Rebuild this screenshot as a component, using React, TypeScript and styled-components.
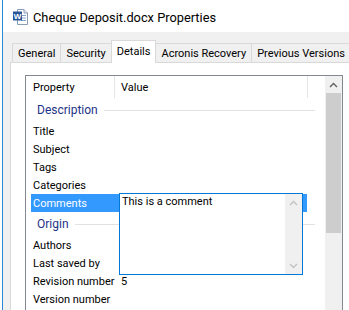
import React from "react";
import styled, { createGlobalStyle } from "styled-components";

const Global = createGlobalStyle`
  html, body { margin: 0; padding: 0; background: #ffffff; }
  body {
    font-family: Roboto, "Liberation Sans", Arial, sans-serif;
    font-size: 11px;
    color: #000000;
    overflow: hidden;
  }
  #root { width: 349px; height: 310px; overflow: hidden; }
`;

const Window = styled.div`
  margin-left: 2px;
  border-left: 1px solid #2b88d8;
  height: 310px;
  display: flex;
  flex-direction: column;
  background: #f0f0f0;
`;

const TitleBar = styled.div`
  height: 32px;
  flex: none;
  background: #ffffff;
  display: flex;
  align-items: center;
  gap: 5px;
  padding: 2px 0 0 10px;
  box-sizing: border-box;
  font-size: 12.8px;
  white-space: nowrap;
`;

const Body = styled.div`
  flex: 1;
  display: flex;
  flex-direction: column;
  padding: 8px 0 0 7px;
  min-height: 0;
`;

const TabStrip = styled.div`
  display: flex;
  align-items: flex-end;
  padding-left: 2px;
  height: 23px;
  flex: none;
  position: relative;
  z-index: 1;
  margin-bottom: -1px;
`;

const Tab = styled.div<{ $active?: boolean }>`
  height: ${(p) => (p.$active ? "23px" : "20px")};
  box-sizing: border-box;
  border: 1px solid #d9d9d9;
  border-bottom: ${(p) => (p.$active ? "none" : "1px solid #d9d9d9")};
  background: ${(p) => (p.$active ? "#ffffff" : "#f0f0f0")};
  margin-left: -1px;
  padding: ${(p) => (p.$active ? "3px 5px 0" : "2px 5px 0 5px")};
  white-space: nowrap;
  line-height: 15px;
  &:first-child { margin-left: 0; }
`;

const Panel = styled.div`
  flex: 1;
  background: #ffffff;
  border: 1px solid #d9d9d9;
  border-right: none;
  border-bottom: none;
  padding: 12px 0 0 14px;
  min-height: 0;
  overflow: hidden;
`;

const ListBox = styled.div`
  width: 318px;
  height: 260px;
  box-sizing: border-box;
  border: 1px solid #828790;
  background: #ffffff;
  display: flex;
`;

const Content = styled.div`
  flex: 1;
  position: relative;
  display: flex;
  flex-direction: column;
`;

const HeaderRow = styled.div`
  display: flex;
  height: 22px;
  flex: none;
`;

const HeaderCell = styled.div<{ $w: number; $pad: number }>`
  width: ${(p) => p.$w}px;
  box-sizing: border-box;
  padding-left: ${(p) => p.$pad}px;
  border-right: 1px solid #e5e5e5;
  display: flex;
  align-items: center;
`;

const GroupHeader = styled.div`
  height: 24px;
  flex: none;
  display: flex;
  align-items: center;
  padding: 0 10px 0 11px;
  color: #1e3287;
  font-size: 12px;
  &::after {
    content: "";
    flex: 1;
    height: 1px;
    background: #e2e2e2;
    margin-left: 6px;
  }
`;

const Row = styled.div<{ $selected?: boolean }>`
  height: 18px;
  flex: none;
  width: 276px;
  margin-left: 5px;
  padding-left: 2px;
  box-sizing: border-box;
  display: flex;
  align-items: center;
  background: ${(p) => (p.$selected ? "#3399ff" : "transparent")};
  color: ${(p) => (p.$selected ? "#ffffff" : "#000000")};
`;

const Label = styled.div`
  width: 88px;
  flex: none;
  white-space: nowrap;
`;

const Value = styled.div`
  flex: 1;
  white-space: nowrap;
`;

const EditBox = styled.div`
  position: absolute;
  left: 93px;
  top: 117px;
  width: 184px;
  height: 82px;
  box-sizing: border-box;
  border: 1px solid #0078d7;
  background: #ffffff;
  display: flex;
`;

const EditText = styled.div`
  flex: 1;
  padding: 1px 0 0 2px;
  line-height: 14px;
  color: #000000;
`;

const ScrollBar = styled.div<{ $light?: boolean }>`
  width: 17px;
  flex: none;
  background: #f0f0f0;
  display: flex;
  flex-direction: column;
  justify-content: ${(p) => (p.$light ? "space-between" : "flex-start")};
`;

const ArrowButton = styled.div`
  height: 17px;
  flex: none;
  display: flex;
  align-items: center;
  justify-content: center;
`;

const Thumb = styled.div`
  height: 140px;
  margin: 0 1px;
  background: #cdcdcd;
`;

const Chevron = ({ up, color }: { up?: boolean; color: string }) => (
  <svg width="9" height="6" viewBox="0 0 9 6">
    <path
      d={up ? "M1 5 L4.5 1.5 L8 5" : "M1 1 L4.5 4.5 L8 1"}
      fill="none"
      stroke={color}
      strokeWidth="1.4"
    />
  </svg>
);

const WordIcon = () => (
  <svg width="15" height="16" viewBox="0 0 15 16">
    <path d="M4.5 0.5 H11 L14.5 4 V15.5 H4.5 Z" fill="#ffffff" stroke="#8a9bb5" />
    <path d="M11 0.5 V4 H14.5" fill="#e8eef7" stroke="#8a9bb5" />
    <rect x="8" y="6" width="5" height="1" fill="#7fa6d9" />
    <rect x="8" y="8.5" width="5" height="1" fill="#7fa6d9" />
    <rect x="8" y="11" width="5" height="1" fill="#7fa6d9" />
    <rect x="0" y="2.5" width="9" height="9" fill="#2a5699" />
    <text
      x="4.5"
      y="10"
      fontSize="8"
      fontWeight="bold"
      fill="#ffffff"
      textAnchor="middle"
      fontFamily="Liberation Sans, Arial, sans-serif"
    >
      W
    </text>
  </svg>
);

const descRows = ["Title", "Subject", "Tags", "Categories"];
const originRows: [string, string][] = [
  ["Authors", ""],
  ["Last saved by", ""],
  ["Revision number", "5"],
  ["Version number", ""],
];

export default function App() {
  return (
    <>
      <Global />
      <Window>
        <TitleBar>
          <WordIcon />
          <span>Cheque Deposit.docx Properties</span>
        </TitleBar>
        <Body>
          <TabStrip>
            <Tab>General</Tab>
            <Tab>Security</Tab>
            <Tab $active>Details</Tab>
            <Tab>Acronis Recovery</Tab>
            <Tab>Previous Versions</Tab>
          </TabStrip>
          <Panel>
            <ListBox>
              <Content>
                <HeaderRow>
                  <HeaderCell $w={89} $pad={7}>Property</HeaderCell>
                  <HeaderCell $w={193} $pad={6}>Value</HeaderCell>
                </HeaderRow>
                <GroupHeader>Description</GroupHeader>
                {descRows.map((r) => (
                  <Row key={r}>
                    <Label>{r}</Label>
                    <Value />
                  </Row>
                ))}
                <Row $selected>
                  <Label>Comments</Label>
                  <Value />
                </Row>
                <GroupHeader>Origin</GroupHeader>
                {originRows.map(([l, v]) => (
                  <Row key={l}>
                    <Label>{l}</Label>
                    <Value>{v}</Value>
                  </Row>
                ))}
                <EditBox>
                  <EditText>This is a comment</EditText>
                  <ScrollBar $light>
                    <ArrowButton>
                      <Chevron up color="#c2c2c2" />
                    </ArrowButton>
                    <ArrowButton>
                      <Chevron color="#c2c2c2" />
                    </ArrowButton>
                  </ScrollBar>
                </EditBox>
              </Content>
              <ScrollBar>
                <ArrowButton>
                  <Chevron up color="#606060" />
                </ArrowButton>
                <Thumb />
              </ScrollBar>
            </ListBox>
          </Panel>
        </Body>
      </Window>
    </>
  );
}
